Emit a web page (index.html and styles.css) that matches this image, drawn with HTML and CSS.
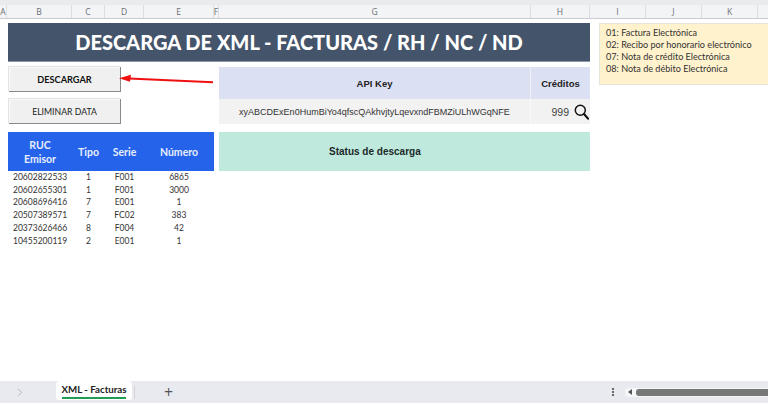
FILE: index.html
```html
<!DOCTYPE html>
<html lang="es">
<head>
<meta charset="utf-8">
<title>Descarga de XML</title>
<link rel="stylesheet" href="styles.css">
</head>
<body>
<div class="app">
  <div class="topstrip"></div>
  <div class="colheads">
    <span class="ch w-a">A</span><span class="ch w-b">B</span><span class="ch w-c">C</span><span class="ch w-d">D</span><span class="ch w-e">E</span><span class="ch w-f">F</span><span class="ch w-g">G</span><span class="ch w-h">H</span><span class="ch w-i">I</span><span class="ch w-j">J</span><span class="ch w-k">K</span><span class="ch w-l"></span>
  </div>
  <main class="sheet">
    <h1 class="banner">DESCARGA DE XML - FACTURAS / RH / NC / ND</h1>
    <div class="body-grid">
      <div class="left">
        <div class="btns">
          <button class="btn btn-main">DESCARGAR</button>
          <button class="btn btn-second">ELIMINAR DATA</button>
        </div>
        <table class="data">
          <thead>
            <tr><th class="c-ruc">RUC<br>Emisor</th><th class="c-tipo">Tipo</th><th class="c-serie">Serie</th><th class="c-num">Número</th></tr>
          </thead>
          <tbody>
            <tr><td class="c-ruc">20602822533</td><td>1</td><td>F001</td><td>6865</td></tr>
            <tr><td class="c-ruc">20602655301</td><td>1</td><td>F001</td><td>3000</td></tr>
            <tr><td class="c-ruc">20608696416</td><td>7</td><td>E001</td><td>1</td></tr>
            <tr><td class="c-ruc">20507389571</td><td>7</td><td>FC02</td><td>383</td></tr>
            <tr><td class="c-ruc">20373626466</td><td>8</td><td>F004</td><td>42</td></tr>
            <tr><td class="c-ruc">10455200119</td><td>2</td><td>E001</td><td>1</td></tr>
          </tbody>
        </table>
      </div>
      <div class="right">
        <div class="api">
          <div class="api-head">API Key</div>
          <div class="cred-head">Créditos</div>
          <div class="api-val">xyABCDExEn0HumBiYo4qfscQAkhvjtyLqevxndFBMZiULhWGqNFE</div>
          <div class="cred-val">
            <span>999</span>
            <svg class="lens" width="15" height="16" viewBox="0 0 15 16" aria-hidden="true"><circle cx="6.3" cy="6.3" r="5" fill="none" stroke="#111" stroke-width="1.5"/><path d="M10 10l4 4.6" stroke="#111" stroke-width="2.2" stroke-linecap="round"/></svg>
          </div>
        </div>
        <div class="status">Status de descarga</div>
      </div>
    </div>
    <svg class="arrow" width="95" height="12" viewBox="0 0 95 12" aria-hidden="true"><path d="M94 8.2 L10 4.6" stroke="#f01010" stroke-width="2" fill="none"/><path d="M0 4.2 L12 0.8 L11 7.8 Z" fill="#f01010"/></svg>
    <aside class="note">
      <div>01: Factura Electrónica</div>
      <div>02: Recibo por honorario electrónico</div>
      <div>07: Nota de crédito Electrónica</div>
      <div>08: Nota de débito Electrónica</div>
    </aside>
  </main>
  <footer class="tabbar">
    <span class="chev">
      <svg width="6" height="9" viewBox="0 0 6 9" aria-hidden="true"><path d="M1 .8l3.6 3.7L1 8.2" fill="none" stroke="#b4b8bf" stroke-width="1"/></svg>
    </span>
    <div class="tab"><span class="tab-label">XML - Facturas</span></div>
    <span class="tab-sep"></span>
    <span class="plus">+</span>
    <span class="dots"><i></i><i></i><i></i></span>
    <div class="scroll">
      <span class="scroll-arrow"></span>
      <span class="thumb"></span>
    </div>
  </footer>
</div>
</body>
</html>
```
FILE: styles.css
```css
* { box-sizing: border-box; }
html, body { margin: 0; padding: 0; }
body { width: 768px; height: 404px; overflow: hidden; background: #fff; font-family: "Liberation Sans", Arial, sans-serif; }
.app { width: 768px; height: 404px; display: flex; flex-direction: column; }
.topstrip { height: 5px; background: #e9ebef; }
.colheads { height: 13.5px; display: flex; background: #f3f4f6; border-bottom: 1px solid #c9cbce; font-family: "Open Sans", sans-serif; font-size: 8.5px; color: #6a6e72; }
.ch { display: flex; align-items: center; justify-content: center; border-right: 1px solid #dcdee1; }
.w-a { width: 7px; }
.w-b { width: 65px; }
.w-c { width: 33px; }
.w-d { width: 39px; }
.w-e { width: 70px; }
.w-f { width: 5px; }
.w-g { width: 312px; }
.w-h { width: 59px; }
.w-i { width: 56px; }
.w-j { width: 56px; }
.w-k { width: 56px; }
.w-l { flex: 1; border-right: 0; }
.sheet { position: relative; flex: 1; padding: 4.5px 0 0 8px; }
.banner { margin: 0; width: 582px; height: 39px; background: #44546a; color: #fff; border-bottom: 1px solid #8b97a7; font-family: Lato, sans-serif; font-weight: 900; font-size: 20px; line-height: 38px; text-align: center; white-space: nowrap; }
.body-grid { display: flex; margin-top: 5px; }
.left { width: 206px; margin-right: 5px; }
.btns { display: flex; flex-direction: column; align-items: flex-start; gap: 7px; padding: 0 0 8px 1px; }
.btn { display: block; width: 112px; height: 25px; padding: 0; background: #f0f0f0; border: 0; border-right: 1.5px solid #8a8a8a; border-bottom: 1.5px solid #8a8a8a; box-shadow: inset 1px 1px 0 #fafafa, -1px -1px 0 #e2e2e2; color: #222; font-family: Lato, sans-serif; font-size: 8.7px; text-align: center; }
.btn-main { font-size: 9.2px; font-weight: 700; color: #111; }
.data { border-collapse: collapse; table-layout: fixed; width: 206px; font-family: Lato, sans-serif; font-size: 8.5px; color: #333; }
.data th { height: 39px; padding: 0; background: #2563eb; color: #e8eefc; font-size: 10.5px; font-weight: 700; line-height: 14px; text-align: center; }
.data td { height: 12.7px; padding: 0; line-height: 12.7px; text-align: center; }
.data th.c-ruc { width: 64px; }
.data td.c-ruc { text-align: left; padding-left: 5px; }
.c-tipo { width: 33px; }
.c-serie { width: 39px; }
.c-num { width: 70px; }
.right { width: 371px; }
.api { display: grid; grid-template-columns: 311px 60px; grid-template-rows: 32px 25px; }
.api-head, .cred-head { display: flex; align-items: center; justify-content: center; background: #dce0f3; color: #222; font-size: 9.5px; font-weight: 700; }
.cred-head { border-left: 1px solid #eef0f8; }
.api-val, .cred-val { display: flex; align-items: center; background: #f2f2f2; color: #333; font-size: 9px; }
.api-val { justify-content: center; white-space: nowrap; }
.cred-val { justify-content: flex-end; padding-right: 1px; gap: 5px; border-left: 1px solid #f8f8f8; font-size: 10.5px; color: #444; }
.lens { display: block; }
.status { height: 39px; margin-top: 8px; padding-left: 110px; display: flex; align-items: center; background: #bee9dc; color: #1c2a2a; font-size: 10px; font-weight: 700; }
.arrow { position: absolute; left: 119px; top: 55px; }
.note { position: absolute; left: 599px; top: 4.5px; width: 169px; height: 62px; padding: 3px 0 0 6px; background: #fff2cc; border: 1px solid #e6e3d8; border-right: 0; color: #333; font-family: Lato, sans-serif; font-size: 9.1px; line-height: 12px; }
.tabbar { height: 22px; margin-bottom: 1px; display: flex; align-items: center; background: #e8eaef; position: relative; }
.chev { width: 56px; display: flex; justify-content: flex-start; padding-left: 17px; }
.tab { align-self: stretch; width: 76px; margin-bottom: 3px; background: #fff; border-radius: 4px 4px 3px 3px; display: flex; justify-content: center; align-items: center; }
.tab-label { display: block; padding-bottom: 2px; border-bottom: 2px solid #1f9d55; font-family: Lato, sans-serif; font-size: 9.7px; font-weight: 700; line-height: 12px; color: #222; }
.tab-sep { width: 1px; height: 13px; margin-left: 2px; background: #d2d4d9; }
.plus { width: 32px; margin-left: 29px; font-family: "Open Sans", sans-serif; font-size: 16px; line-height: 14px; color: #555; }
.dots { display: flex; flex-direction: column; gap: 1px; margin-left: 416px; }
.dots i { display: block; width: 2px; height: 2px; background: #666; }
.scroll { display: flex; align-items: center; flex: 1; height: 9px; margin-left: 11px; padding-left: 3px; background: #f5f6f8; border-radius: 4px 0 0 4px; }
.scroll-arrow { width: 0; height: 0; border-top: 3.5px solid transparent; border-bottom: 3.5px solid transparent; border-right: 4px solid #555; }
.thumb { flex: 1; height: 7px; margin-left: 4px; background: #777; border-radius: 3px 0 0 3px; }
```
